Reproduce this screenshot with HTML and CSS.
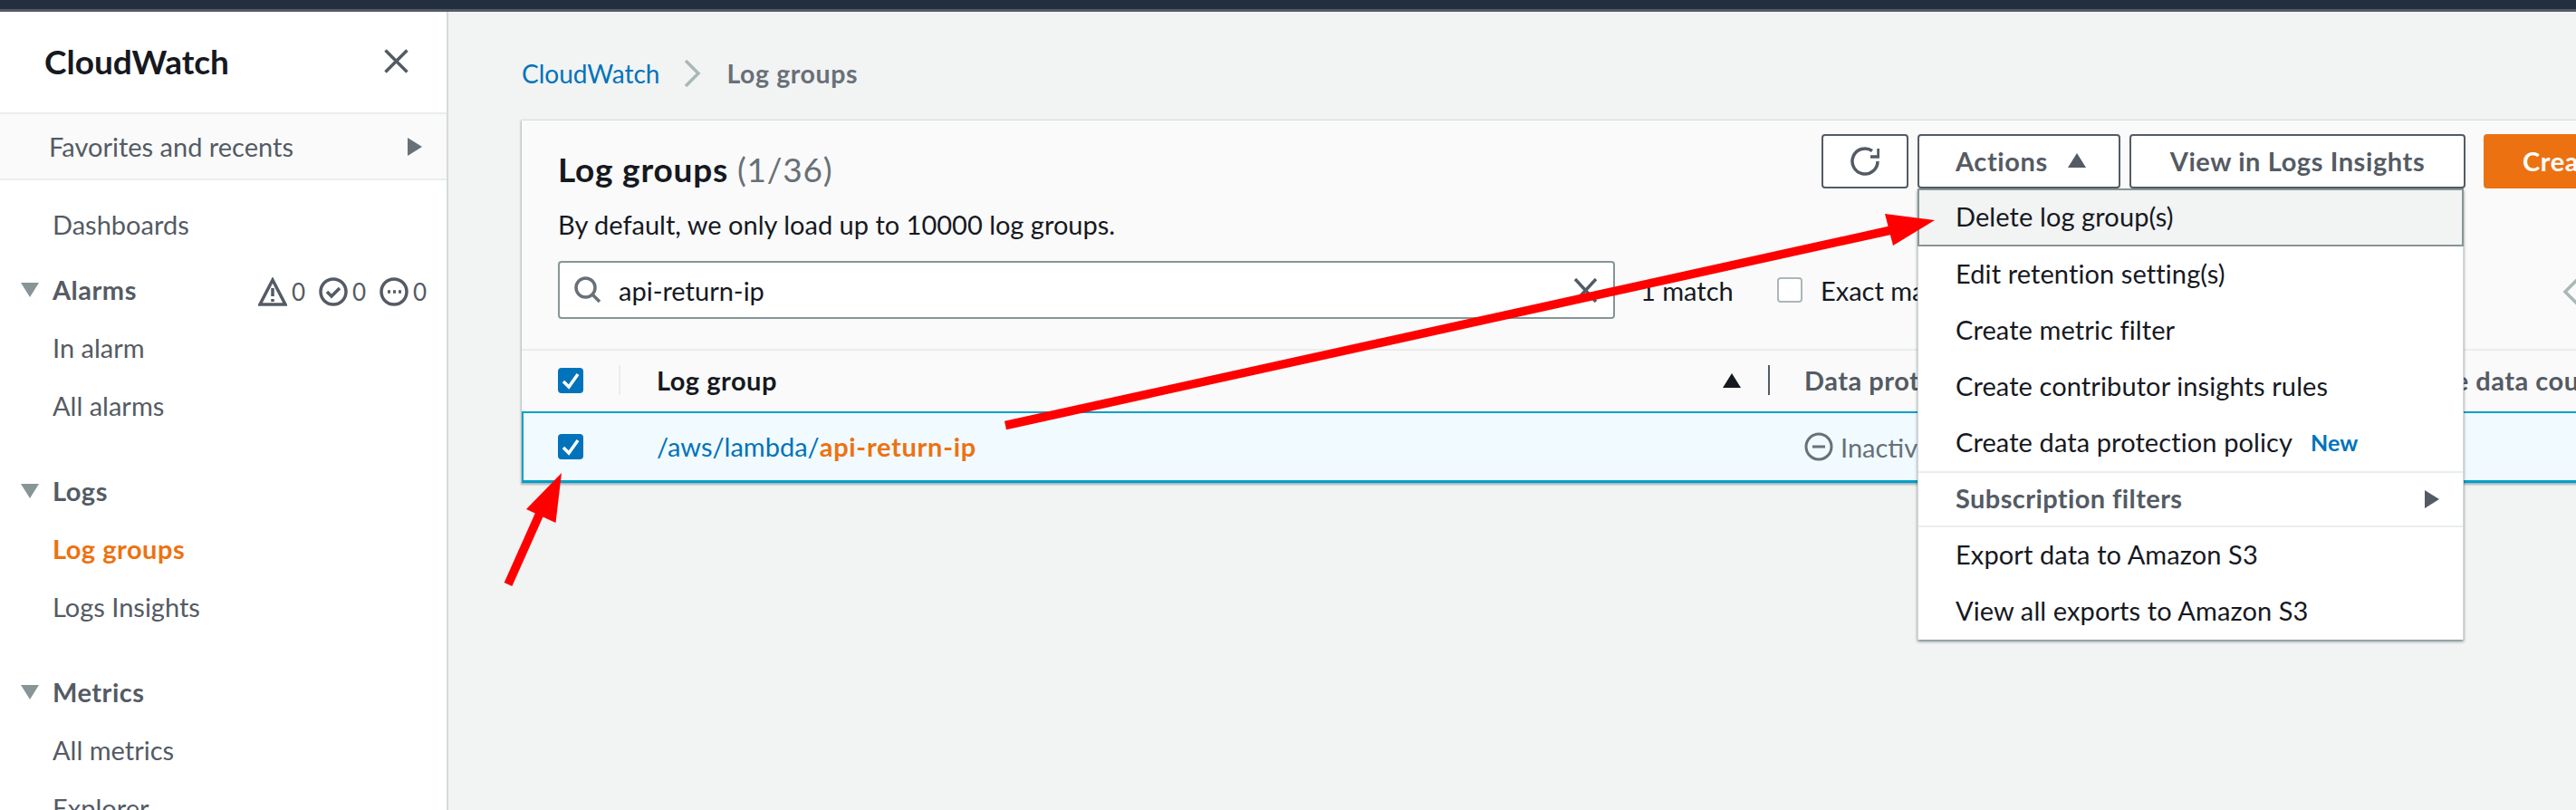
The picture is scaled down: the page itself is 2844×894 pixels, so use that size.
FILE: index.html
```html
<!DOCTYPE html>
<html lang="en">
<head>
<meta charset="utf-8">
<title>CloudWatch Log groups</title>
<link rel="stylesheet" href="styles.css">
</head>
<body>
<div class="topbar"></div>
<div class="shell">
  <aside class="sidebar">
    <div class="side-head">
      <span class="side-title">CloudWatch</span>
      <svg class="side-close" viewBox="0 0 27 27"><path d="M1.5 1.5l24 24M25.5 1.5l-24 24"/></svg>
    </div>
    <div class="favorites">
      <span>Favorites and recents</span>
      <svg class="fav-caret" viewBox="0 0 16 20"><path d="M0 0l16 10L0 20z"/></svg>
    </div>
    <nav class="nav">
      <div class="nav-row first"><span>Dashboards</span></div>
      <div class="nav-section">
        <div class="nav-row head">
          <svg class="tri" viewBox="0 0 20 16"><path d="M0 0h20L10 16z"/></svg>
          <span>Alarms</span>
          <span class="alarm-stats">
            <svg class="stat-ico" viewBox="0 0 32 32"><path class="s" d="M16 3L30 30H2z"/><path class="s" d="M16 12v9M16 24v3"/></svg><span class="stat-n">0</span>
            <svg class="stat-ico" viewBox="0 0 32 32"><circle class="s" cx="16" cy="16" r="14"/><path class="s" d="M9 16l5 5 9-9"/></svg><span class="stat-n">0</span>
            <svg class="stat-ico" viewBox="0 0 32 32"><circle class="s" cx="16" cy="16" r="14"/><path class="s" d="M9 16h3M15 16h3M21 16h3"/></svg><span class="stat-n">0</span>
          </span>
        </div>
        <div class="nav-row">In alarm</div>
        <div class="nav-row">All alarms</div>
      </div>
      <div class="nav-section">
        <div class="nav-row head">
          <svg class="tri" viewBox="0 0 20 16"><path d="M0 0h20L10 16z"/></svg>
          <span>Logs</span>
        </div>
        <div class="nav-row active">Log groups</div>
        <div class="nav-row">Logs Insights</div>
      </div>
      <div class="nav-section">
        <div class="nav-row head">
          <svg class="tri" viewBox="0 0 20 16"><path d="M0 0h20L10 16z"/></svg>
          <span>Metrics</span>
        </div>
        <div class="nav-row">All metrics</div>
        <div class="nav-row">Explorer</div>
      </div>
    </nav>
  </aside>

  <main class="main">
    <div class="crumbs">
      <a class="crumb-link">CloudWatch</a>
      <svg class="crumb-sep" viewBox="0 0 19 30"><path d="M2 1l14 14L2 29"/></svg>
      <span class="crumb-cur">Log groups</span>
    </div>

    <section class="panel">
      <div class="panel-head">
        <div class="head-top">
          <div class="head-text">
            <h1 class="title">Log groups <span class="count">(1/36)</span></h1>
            <p class="sub">By default, we only load up to 10000 log groups.</p>
          </div>
          <div class="actions">
            <button class="btn btn-icon">
              <svg class="refresh" viewBox="0 0 32 32"><path d="M30 16A14 14 0 1 1 24 4.5"/><path d="M31 2v9h-9"/></svg>
            </button>
            <div class="menu-wrap">
              <button class="btn btn-actions">Actions
                <svg class="btn-caret" viewBox="0 0 20 16"><path d="M10 0l10 16H0z"/></svg>
              </button>
              <ul class="menu">
                <li class="menu-item hover">Delete log group(s)</li>
                <li class="menu-item">Edit retention setting(s)</li>
                <li class="menu-item">Create metric filter</li>
                <li class="menu-item">Create contributor insights rules</li>
                <li class="menu-item">Create data protection policy<span class="new">New</span></li>
                <li class="menu-item group">Subscription filters
                  <svg class="menu-caret" viewBox="0 0 16 20"><path d="M0 0l16 10L0 20z"/></svg>
                </li>
                <li class="menu-item">Export data to Amazon S3</li>
                <li class="menu-item">View all exports to Amazon S3</li>
              </ul>
            </div>
            <button class="btn btn-insights">View in Logs Insights</button>
            <button class="btn btn-primary">Create log group</button>
          </div>
        </div>
        <div class="filter-row">
          <div class="search">
            <svg class="search-ico" viewBox="0 0 30 30"><circle cx="12.5" cy="12.5" r="10.5"/><path d="M20 20l8 8"/></svg>
            <span class="search-text">api-return-ip</span>
            <svg class="search-x" viewBox="0 0 27 27"><path d="M2 1l23 25M25 1L2 26"/></svg>
          </div>
          <span class="match">1 match</span>
          <span class="check-empty"></span>
          <span class="exact">Exact match</span>
          <svg class="pager-prev" viewBox="0 0 18 30"><path d="M16 1L2 15l14 14"/></svg>
        </div>
      </div>

      <div class="table-head">
        <span class="checkbox"><svg viewBox="0 0 28 28"><path d="M6 15l6 6 10-14"/></svg></span>
        <span class="col-sep first"></span>
        <span class="th th-name">Log group</span>
        <svg class="sort" viewBox="0 0 20 16"><path d="M10 0l10 16H0z"/></svg>
        <span class="col-sep"></span>
        <span class="th th-data">Data protection</span>
        <span class="th th-count">Sensitive data count</span>
      </div>
      <div class="table-row">
        <span class="checkbox"><svg viewBox="0 0 28 28"><path d="M6 15l6 6 10-14"/></svg></span>
        <span class="row-name"><a class="crumb-link">/aws/lambda/</a><span class="hit">api-return-ip</span></span>
        <span class="status">
          <svg class="status-ico" viewBox="0 0 32 32"><circle cx="16" cy="16" r="14"/><path d="M9 16h14"/></svg>
          Inactive
        </span>
      </div>
    </section>
  </main>
</div>

<svg class="annotations" viewBox="0 0 2844 894">
  <path class="arrow-line" d="M1110 469.5L2088 254"/>
  <path class="arrow-head" d="M2136 243L2081 236L2090 271z"/>
  <path class="arrow-line" d="M561 645L598 562"/>
  <path class="arrow-head" d="M620 522L581 562L613.5 577z"/>
</svg>
</body>
</html>
```

FILE: styles.css
```css
* { box-sizing: border-box; }
html, body { margin: 0; padding: 0; width: 2844px; height: 894px; overflow: hidden; }
body {
  position: relative;
  font-family: "Lato", "Liberation Sans", sans-serif;
  font-size: 29px;
  color: #16191f;
  background: #f2f3f3;
}
p, h1, ul { margin: 0; padding: 0; }
svg { display: block; flex: none; }

.topbar { height: 13px; background: #232f3e; border-bottom: 3px solid #545b64; }
.shell { display: flex; height: 881px; }

.sidebar {
  width: 495px;
  flex: none;
  background: #fff;
  border-right: 2px solid #d5dbdb;
  color: #545b64;
  overflow: hidden;
}
.side-head { height: 111px; display: flex; align-items: center; justify-content: space-between; padding: 0 42px 0 49px; }
.side-title { font-size: 37px; font-weight: 700; color: #16191f; margin-top: -2px; }
.side-close { width: 27px; height: 27px; margin-top: -2px; }
.side-close path { fill: none; stroke: #545b64; stroke-width: 3.5; }
.favorites {
  height: 75px;
  display: flex; align-items: center; justify-content: space-between;
  padding: 0 27px 0 54px;
  background: #fafafa;
  border-top: 2px solid #eaeded;
  border-bottom: 2px solid #eaeded;
}
.fav-caret { width: 16px; height: 20px; fill: #687078; }
.nav { padding-top: 16px; }
.nav-section { margin-top: 8px; }
.nav-section + .nav-section { margin-top: 30px; }
.nav-row { height: 64px; display: flex; align-items: center; padding-left: 58px; position: relative; }
.nav-row.head { font-weight: 700; letter-spacing: .5px; }
.nav-row.active { color: #ec7211; font-weight: 700; letter-spacing: .5px; }
.tri { position: absolute; left: 23px; top: 25px; width: 20px; height: 16px; fill: #879596; }
.alarm-stats { position: absolute; left: 285px; top: 19px; display: flex; align-items: center; font-weight: 400; font-size: 26px; letter-spacing: 0; }
.stat-ico { width: 32px; height: 32px; }
.stat-ico .s { fill: none; stroke: #545b64; stroke-width: 3.5; }
.stat-n { width: 35px; padding-left: 5px; }

.main { flex: 1; min-width: 0; padding-left: 81px; overflow: hidden; }
.crumbs { height: 120px; display: flex; align-items: center; padding-top: 16px; }
.crumb-link { color: #0073bb; }
.crumbs .crumb-link { font-size: 28px; }
.crumb-sep { width: 19px; height: 30px; margin: 0 28px 0 27px; }
.crumb-sep path { fill: none; stroke: #aab7b8; stroke-width: 3.5; }
.crumb-cur { color: #687078; font-weight: 700; font-size: 28.5px; letter-spacing: .6px; }

.panel { background: #fafafa; box-shadow: 0 1px 2px 1px rgba(0, 28, 36, .3); }
.panel-head { padding: 15px 0 33px 40px; border-bottom: 2px solid #eaeded; }
.head-top { display: flex; height: 140px; }
.head-text { width: 1395px; flex: none; }
.title { font-size: 37px; font-weight: 700; line-height: 44px; margin-top: 17px; letter-spacing: .8px; }
.count { font-weight: 400; color: #687078; }
.sub { line-height: 36px; margin-top: 21px; }
.actions { display: flex; gap: 10px; align-items: flex-start; flex: none; }
.btn {
  height: 60px;
  padding: 0 41px 2px;
  display: flex; align-items: center;
  font: 700 29px "Lato", "Liberation Sans", sans-serif;
  letter-spacing: .6px;
  color: #545b64;
  background: #fff;
  border: 2px solid #545b64;
  border-radius: 4px;
  white-space: nowrap;
}
.btn-icon { width: 96px; padding: 0; justify-content: center; }
.refresh { width: 32px; height: 32px; }
.refresh path { fill: none; stroke: #545b64; stroke-width: 3.5; }
.btn-actions { width: 224px; gap: 22px; padding-left: 40px; padding-right: 0; }
.btn-caret { width: 20px; height: 16px; fill: #545b64; }
.btn-insights { width: 371px; padding-left: 0; padding-right: 0; justify-content: center; }
.btn-primary { margin-left: 10px; background: #ec7211; border-color: #ec7211; color: #fff; }

.menu-wrap { position: relative; }
.menu {
  position: absolute;
  left: 0; top: 60px;
  width: 603px;
  list-style: none;
  background: #fff;
  box-shadow: 0 2px 3px rgba(0, 28, 36, .5);
  border: 1px solid #d5dbdb;
  border-top: 0;
  border-bottom: 0;
  z-index: 5;
}
.menu-item { height: 62px; display: flex; align-items: center; padding: 0 0 3px 41px; position: relative; letter-spacing: .1px; }
.menu-item.hover { height: 64px; margin: 0 -1px; padding-left: 40px; background: #f2f3f3; border: 2px solid #879596; }
.menu-item.group {
  color: #545b64; font-weight: 700; letter-spacing: .4px;
  border-top: 2px solid #eaeded;
  border-bottom: 2px solid #eaeded;
}
.new { margin-left: 20px; font-size: 25px; font-weight: 700; color: #0073bb; }
.menu-caret { position: absolute; right: 26px; top: 19px; width: 16px; height: 20px; fill: #545b64; }

.filter-row { display: flex; align-items: center; height: 64px; position: relative; }
.search {
  width: 1167px; height: 64px;
  display: flex; align-items: center;
  padding: 0 16px;
  background: #fff;
  border: 2px solid #879596;
  border-radius: 4px;
}
.search-ico { width: 30px; height: 30px; }
.search-ico circle, .search-ico path { fill: none; stroke: #687078; stroke-width: 3.5; }
.search-text { margin-left: 19px; flex: 1; }
.search-x { width: 27px; height: 27px; margin-right: 1px; }
.search-x path { fill: none; stroke: #545b64; stroke-width: 3.5; }
.match { margin-left: 28px; width: 151px; }
.check-empty { width: 28px; height: 28px; background: #fff; border: 2px solid #aab7b8; border-radius: 4px; }
.exact { margin-left: 20px; }
.pager-prev { position: absolute; left: 2214px; top: 19px; width: 18px; height: 30px; }
.pager-prev path { fill: none; stroke: #aab7b8; stroke-width: 3.5; }

.table-head { height: 67px; display: flex; align-items: center; padding-left: 40px; padding-bottom: 2px; position: relative; }
.checkbox { width: 28px; height: 28px; background: #0073bb; border-radius: 4px; flex: none; }
.checkbox svg { width: 28px; height: 28px; }
.checkbox path { fill: none; stroke: #fff; stroke-width: 3.5; }
.col-sep { width: 2px; height: 33px; background: #545b64; margin-left: 30px; flex: none; }
.col-sep.first { background: #eaeded; margin-left: 39px; }
.th { font-weight: 700; letter-spacing: .5px; flex: none; }
.th-name { color: #16191f; margin-left: 40px; width: 1177px; }
.sort { width: 20px; height: 16px; fill: #16191f; }
.th-data { margin-left: 38px; color: #545b64; width: 613px; }
.th-count { color: #545b64; white-space: nowrap; }

.table-row {
  height: 79px;
  display: flex; align-items: center;
  padding-left: 38px;
  background: #f1faff;
  border: 2px solid #00a1c9;
  border-bottom-width: 3px;
  border-right: 0;
}
.row-name { margin-left: 81px; width: 1267px; flex: none; padding-bottom: 2px; }
.hit { color: #ec7211; font-weight: 700; letter-spacing: .7px; }
.status { display: flex; align-items: center; gap: 8px; color: #687078; }
.status-ico { width: 32px; height: 32px; }
.status-ico circle, .status-ico path { fill: none; stroke: #687078; stroke-width: 3; }

.annotations { position: absolute; left: 0; top: 0; width: 2844px; height: 894px; z-index: 10; pointer-events: none; }
.arrow-line { fill: none; stroke: #fe0000; stroke-width: 9.5; }
.arrow-head { fill: #fe0000; }
```
